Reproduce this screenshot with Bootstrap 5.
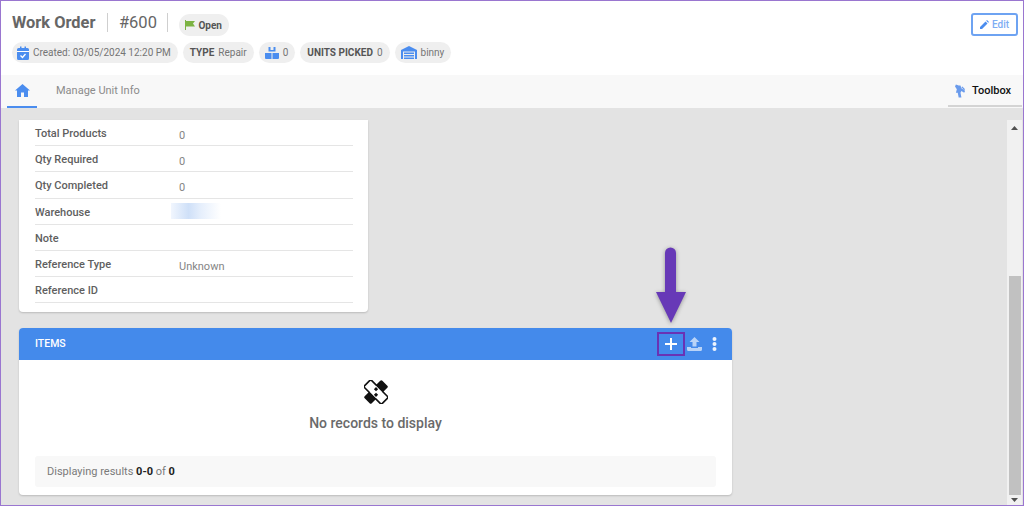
<!doctype html>
<html lang="en"><head><meta charset="utf-8">
<link href="https://cdn.jsdelivr.net/npm/bootstrap@5.3.0/dist/css/bootstrap.min.css" rel="stylesheet">
<style>
html,body{height:100%;overflow:hidden}
body{font-family:Roboto,"Liberation Sans",sans-serif;background:#e3e3e3;color:#6c6c6c;font-size:11px}
.shell{position:relative;height:506px;border:1px solid #9a76d0;display:flex;flex-direction:column;overflow:hidden}
.head{height:74px;background:#fff;padding:10px 4px 0 11px;flex:none}
.titlerow{height:25px;display:flex;align-items:flex-start}
.title{font-size:16.4px;font-weight:700;color:#666;line-height:24px}
.num{font-size:16.5px;color:#666;line-height:24px;margin-left:10.500px;margin-right:10.500px}
.vsep{width:1px;height:19px;background:#cfcfcf;margin-top:2px}
.pill{height:21px;border-radius:11px;background:#efefef;padding:0 7px;display:flex;align-items:center;gap:4px;white-space:nowrap;font-size:10px;color:#757575}
.pill b{color:#555;font-weight:700}
.flagpill{height:22px;margin:3px 0 0 11px;padding:0 7px 0 6px;gap:3px}
.pills{display:flex;gap:5px;margin-top:6px}
.edit{width:47px;height:23px;border:2px solid #6ea3f2;border-radius:3px;background:#fff;color:#7dadf3;font-size:10px;font-weight:500;display:flex;align-items:center;justify-content:center;gap:3px;padding:0;margin:2px 1px 0 0}
.tabs{height:33px;background:#f8f8f8;flex:none}
.tb-home{width:30px;margin-left:6px;border-bottom:2px solid #4b8def;display:flex;align-items:center;justify-content:center}
.tb-link{margin-left:19px;font-size:11px;color:#8b8b8b;padding-top:8px}
.tb-tool{width:74px;margin-right:1px;border-bottom:2px solid #d4d4d4;color:#111;font-weight:500;font-size:11px;display:flex;align-items:center;gap:6px;padding:2px 0 0 7px;height:32px}
.main{flex:1;display:flex;min-height:0}
.pane{flex:1;padding:12px 0 0 18px;display:flex;flex-direction:column;gap:16px;align-items:flex-start}
.sb{width:15px;margin-right:1px;margin-top:12px;background:#f1f1f1;display:flex;flex-direction:column;flex:none;align-items:flex-end}
.sb-up{height:15px;width:100%;display:flex;align-items:center;justify-content:center}
.sb-thumb{margin-top:auto;height:219px;width:12px;background:#c1c1c1;margin-right:1px}
.sb-dn{height:10px;width:100%;display:flex;align-items:center;justify-content:center}
.info{width:349px;height:192px;background:#fff;border-radius:0 0 4px 4px;box-shadow:0 1px 2px rgba(0,0,0,.18);padding:0 15px 0 16px}
.line{height:26.2px;border-bottom:1px solid #e5e5e5;display:flex;font-size:11px}
.line b{width:144px;color:#5f5f5f;font-weight:500;line-height:27px}
.line span{color:#858585;line-height:31px}
.blur{width:50px;height:16px;margin:4px 0 0 -8px;background:linear-gradient(90deg,#f1f6fe,#cfe0f8 35%,#e6effc 60%,#fff)}
.items{width:713px;height:167px;background:#fff;border-radius:4px;box-shadow:0 1px 2px rgba(0,0,0,.18);overflow:hidden;display:flex;flex-direction:column}
.items-h{height:32px;background:#448aeb;color:#fff;font-weight:500;font-size:10.5px;padding:0 15px 0 16px}
.addbtn{width:28px;height:24px;border:2px solid #6a32b4;display:flex;align-items:center;justify-content:center}
.empty{font-size:14px;font-weight:500;color:#6a6a6a;padding-top:20px;gap:9px}
.foot{margin:auto 16px 8px;height:31px;background:#f8f8f8;border-radius:3px;padding-left:12px;line-height:31px;font-size:11px;color:#7a7a7a}
.foot b{color:#222;font-weight:700}
.arrow{position:absolute;left:653px;top:245px;filter:drop-shadow(0 1px 2px rgba(0,0,0,.35))}
</style></head><body>
<div class="shell">
 <div class="head d-flex justify-content-between">
  <div>
   <div class="titlerow">
    <span class="title me-2 pe-1">Work Order</span><span class="vsep"></span><span class="num">#600</span><span class="vsep"></span>
    <span class="pill flagpill"><svg width="10" height="10" viewBox="0 0 10 10"><path fill="#7cb342" d="M0 0h1v10H0zM1 1h9L8 3.500 10 6.500H1z"/></svg><b style="font-weight:700">Open</b></span>
   </div>
   <div class="pills">
    <span class="pill" style="padding-left:5px"><svg width="12" height="14" viewBox="0 0 12 14"><path fill="#4b8def" d="M1.500 2H3V.5h1.500V2h3V.5H9V2h1.500A1.500 1.500 0 0 1 12 3.500v9a1.500 1.500 0 0 1-1.500 1.500h-9A1.500 1.500 0 0 1 0 12.500v-9A1.500 1.500 0 0 1 1.500 2z"/><path fill="none" stroke="#fff" d="M0 5.500h12"/><path fill="none" stroke="#fff" stroke-width="1.300" d="M3.500 9.500l2 2 3-3.500"/></svg>Created: 03/05/2024 12:20 PM</span>
    <span class="pill"><b>TYPE</b> Repair</span>
    <span class="pill" style="padding-left:6px"><svg width="14" height="12" viewBox="0 0 14 12"><path fill="#4b8def" d="M0 6h6.500v6H1a1 1 0 0 1-1-1zM7.500 6H14v5a1 1 0 0 1-1 1H7.500zM3.500 0h2v3h3V0h2v4.500h-7z"/></svg>0</span>
    <span class="pill"><b>UNITS PICKED</b> 0</span>
    <span class="pill" style="padding-left:6px"><svg width="16" height="13" viewBox="0 0 16 13"><path fill="#4b8def" d="M0 4l8-4 8 4v9h-2V5.500H2V13H0z"/><path fill="#4b8def" d="M3 6.500h10v1.500H3zM3 9h10v1.500H3zM3 11.500h10V13H3z"/></svg>binny</span>
   </div>
  </div>
  <div><button class="edit" type="button"><svg width="9" height="9" viewBox="0 0 9 9"><path fill="#4b8def" d="M0 9V7l5.500-5.500 2 2L2 9zM6.200.8 7 0l2 2-.8.800z"/></svg>Edit</button></div>
 </div>
 <div class="tabs d-flex">
  <div class="tb-home"><svg width="15" height="13" viewBox="0 0 15 13"><path fill="#4b8def" d="M7.500 0 15 6.500h-2V13H9V8.500H6V13H2V6.500H0z"/></svg></div>
  <div class="tb-link">Manage Unit Info</div>
  <div class="tb-tool ms-auto"><svg width="11" height="14" viewBox="0 0 12 14"><path fill="#6a9bec" d="M1 0l3 1 2 0 1 3 3 2 1 1-1 2-3-2-1 2 1 5H4L3 9 1 9l1-4-2-3zM8 2l3 3-1 1-3-3z"/></svg>Toolbox</div>
 </div>
 <div class="main">
  <div class="pane">
   <div class="info">
    <div class="line"><b>Total Products</b><span>0</span></div>
    <div class="line"><b>Qty Required</b><span>0</span></div>
    <div class="line"><b>Qty Completed</b><span>0</span></div>
    <div class="line"><b>Warehouse</b><div class="blur"></div></div>
    <div class="line"><b>Note</b></div>
    <div class="line"><b>Reference Type</b><span>Unknown</span></div>
    <div class="line"><b>Reference ID</b></div>
   </div>
   <div class="items">
    <div class="items-h d-flex align-items-center justify-content-between">
     <span>ITEMS</span>
     <div class="d-flex align-items-center" style="gap:2px">
      <span class="addbtn"><svg width="12" height="12" viewBox="0 0 12 12"><path fill="#fff" d="M5 0h2v5h5v2H7v5H5V7H0V5h5z"/></svg></span>
      <svg width="15" height="14" viewBox="0 0 15 14"><path fill="#b9d3f7" d="M7.500 0l5 5H9.500v4.500h-4V5H2.500zM0 10h4v1h7v-1h4v2.500a1.500 1.500 0 0 1-1.500 1.500h-12A1.500 1.500 0 0 1 0 12.500z"/></svg>
      <svg class="ms-2" width="5" height="14" viewBox="0 0 5 14"><g fill="#eef4fd"><circle cx="2.500" cy="2" r="2"/><circle cx="2.500" cy="7" r="2"/><circle cx="2.500" cy="12" r="2"/></g></svg>
     </div>
    </div>
    <div class="empty d-flex flex-column align-items-center">
     <svg width="24" height="24" viewBox="0 0 24 24"><g transform="rotate(45 12 12)"><rect x="7" y="-.5" width="10" height="25" rx="1.500" fill="#111"/><rect x="-.5" y="7" width="25" height="10" rx="1.500" fill="#fff" stroke="#111" stroke-width="1.600"/><rect x="7.800" y="7.800" width="8.400" height="8.400" fill="#fff"/><g fill="#111"><rect x="8.500" y="8.500" width="3" height="3"/><rect x="12.500" y="12.500" width="3" height="3"/></g></g></svg>
     <div>No records to display</div>
    </div>
    <div class="foot">Displaying results <b>0-0</b> of <b>0</b></div>
   </div>
  </div>
  <div class="sb"><div class="sb-up"><svg width="7" height="4" viewBox="0 0 7 4"><path fill="#505050" d="M3.500 0 7 4H0z"/></svg></div><div class="sb-thumb"></div><div class="sb-dn"><svg width="7" height="4" viewBox="0 0 7 4"><path fill="#505050" d="M0 0h7L3.500 4z"/></svg></div></div>
 </div>
 <svg class="arrow" width="32" height="78" viewBox="0 0 32 78"><path fill="#6739b7" d="M11 7a5.500 5.500 0 0 1 11 0v39h10L17 77 2 46h9z"/></svg>
</div>
</body></html>
